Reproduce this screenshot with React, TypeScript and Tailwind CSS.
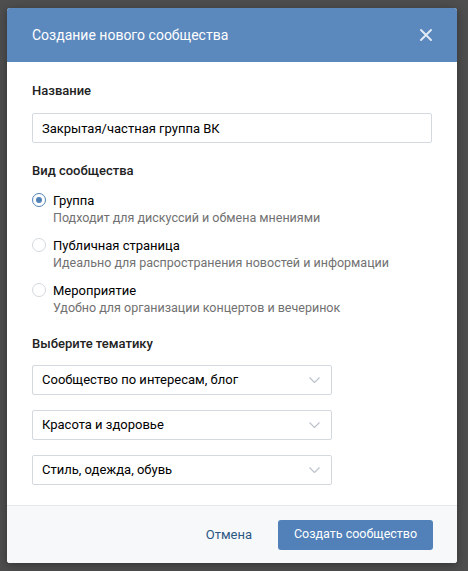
import React, { useState } from 'react';

const font = { fontFamily: 'Roboto, "Noto Sans", sans-serif' };

const kinds = [
  { id: 'group', title: 'Группа', hint: 'Подходит для дискуссий и обмена мнениями' },
  { id: 'public', title: 'Публичная страница', hint: 'Идеально для распространения новостей и информации' },
  { id: 'event', title: 'Мероприятие', hint: 'Удобно для организации концертов и вечеринок' },
];

const topics = ['Сообщество по интересам, блог', 'Красота и здоровье', 'Стиль, одежда, обувь'];

const Chevron = () => (
  <svg width="11" height="6" viewBox="0 0 11 6" fill="none" stroke="#bcc3cc" strokeWidth="1.2">
    <path d="M0.5 0.5l5 5 5-5" />
  </svg>
);

const Radio = ({ checked }: { checked: boolean }) => (
  <span
    className={`mt-[1px] flex h-[14px] w-[14px] shrink-0 items-center justify-center rounded-full border bg-white ${
      checked ? 'border-[#5181b8]' : 'border-[#d3d9de]'
    }`}
  >
    {checked && <span className="h-[6px] w-[6px] rounded-full bg-[#5181b8]" />}
  </span>
);

export default function App() {
  const [kind, setKind] = useState('group');
  const [name, setName] = useState('Закрытая/частная группа ВК');

  return (
    <div className="h-[571px] w-[468px] overflow-hidden bg-[#4e4e4e] pl-[7px] pt-[8px]" style={font}>
      <div className="w-[450px] overflow-hidden rounded-[3px] bg-white shadow-[0_2px_10px_rgba(0,0,0,0.35)]">
        <div className="flex h-[54px] items-center justify-between bg-[#5b88bd] pl-[25px] pr-[25px]">
          <span className="text-[14px] text-white">Создание нового сообщества</span>
          <svg width="12" height="12" viewBox="0 0 12 12" stroke="#e4ebf4" strokeWidth="1.9" strokeLinecap="round">
            <path d="M1 1l10 10M11 1L1 11" />
          </svg>
        </div>

        <div className="px-[25px] pb-[20px] pt-[21px]">
          <div className="text-[13px] font-medium leading-[16px] text-[#222]">Название</div>
          <input
            value={name}
            onChange={(e) => setName(e.target.value)}
            className="mt-[14px] h-[30px] w-[400px] rounded-[2px] border border-[#d3d9de] px-[9px] text-[13px] text-[#000] outline-none"
            style={font}
          />

          <div className="mt-[20px] text-[13px] font-medium leading-[16px] text-[#222]">Вид сообщества</div>
          <div className="mt-[13px] flex flex-col gap-[11px]">
            {kinds.map((k) => (
              <div key={k.id} className="flex cursor-pointer gap-[7px]" onClick={() => setKind(k.id)}>
                <Radio checked={kind === k.id} />
                <div>
                  <div className="text-[13px] leading-[17px] text-[#000]">{k.title}</div>
                  <div className="mt-[1px] text-[12.5px] leading-[16px] text-[#717171]">{k.hint}</div>
                </div>
              </div>
            ))}
          </div>

          <div className="mt-[20px] text-[13px] font-medium leading-[16px] text-[#222]">Выберите тематику</div>
          <div className="mt-[13px] flex flex-col gap-[15px]">
            {topics.map((t) => (
              <div
                key={t}
                className="flex h-[30px] w-[300px] items-center justify-between rounded-[2px] border border-[#d3d9de] pl-[9px] pr-[11px] text-[13px] text-[#000]"
              >
                <span>{t}</span>
                <Chevron />
              </div>
            ))}
          </div>
        </div>

        <div className="flex h-[58px] items-center justify-end gap-[26px] border-t border-[#e7e8ec] bg-[#f7f8fa] pr-[24px]">
          <button className="text-[13px] text-[#2a5885]">Отмена</button>
          <button className="h-[30px] w-[155px] rounded-[3px] bg-[#5181b8] text-[12.5px] text-white">
            Создать сообщество
          </button>
        </div>
      </div>
    </div>
  );
}
